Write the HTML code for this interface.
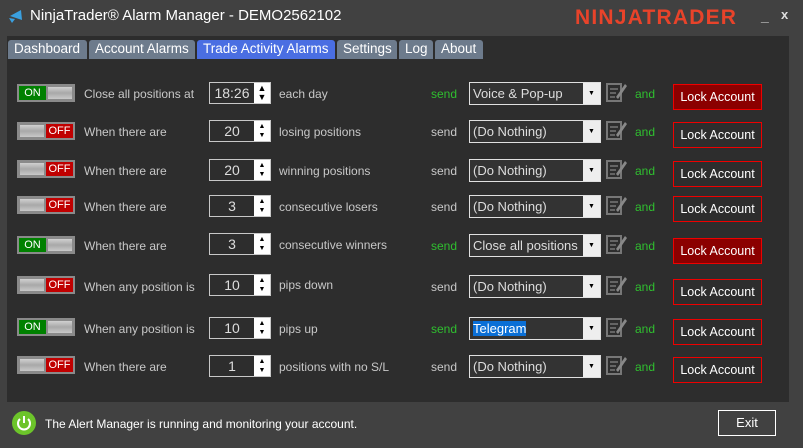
<!DOCTYPE html>
<html><head><meta charset="utf-8"><style>
*{margin:0;padding:0;box-sizing:border-box}
body{width:803px;height:448px;background:#414141;font-family:"Liberation Sans",sans-serif;font-size:12px;color:#c8c8c8;position:relative;overflow:hidden}
.a{position:absolute;white-space:nowrap}
.title{left:30px;top:7px;font-size:15px;color:#fff}
.logo{left:575px;top:6px;font-size:21px;font-weight:bold;color:#e8432a;letter-spacing:1.2px}
.strip{left:7px;top:36px;width:782px;height:22px;background:#2d2d2d}
.panel{left:7px;top:58px;width:782px;height:344px;background:#2d2d2d}
.tab{top:40px;height:19px;background:#6d7b8c;color:#fff;font-size:13.5px;padding:1px 0 0 6px;border-radius:3px 3px 0 0}
.tab.on{background:#4a6ee2}
.tg{left:17px;width:58px;height:18px;background:#8a8a8a}
.tg .k{position:absolute;top:2px;width:27px;height:14px;color:#fff;font-size:11px;text-align:center;line-height:14px}
.tg .g{position:absolute;top:3px;width:24px;height:12px;background:linear-gradient(#d0d0d0,#a8a8a8 50%,#c8c8c8)}
.sp{left:209px;width:62px;height:22px;border:1px solid #c8c8c8;background:#2d2d2d;color:#ddd;font-size:14px}
.sp .v{position:absolute;left:0;width:44px;text-align:center;top:2px}
.sp .b{position:absolute;right:0;top:0;width:16px;height:20px;background:#fff;color:#000;font-size:7px;text-align:center;line-height:9px;padding-top:1px}
.dd{left:469px;width:132px;height:23px;border:1px solid #e0e0e0;background:#333;color:#ddd;font-size:13px;padding:3px 0 0 3px}
.dd .b{position:absolute;right:0;top:0;width:17px;height:21px;background:#eee;color:#000;font-size:7px;text-align:center;line-height:21px}
.lk{left:673px;width:89px;height:26px;border:1px solid #e00;color:#fff;font-size:12.5px;text-align:center;line-height:24px}
.lk.f{background:#8b0000}
.gr{color:#2fbf2f}
</style></head><body>
<svg class="a" style="left:7px;top:8px" width="18" height="18" viewBox="0 0 18 18"><path d="M3 8 L14 2 L15 12 Z" fill="#3aa0e0"/><path d="M2 10 L8 11 L5 15 Z" fill="#3aa0e0"/></svg>
<div class="a title">NinjaTrader® Alarm Manager - DEMO2562102</div>
<div class="a logo">NINJATRADER</div>
<div class="a" style="left:761px;top:8px;color:#ddd;font-size:14px;font-weight:bold">_</div>
<div class="a" style="left:781px;top:7px;color:#ddd;font-size:13px;font-weight:bold">x</div>
<div class="a strip"></div>
<div class="a panel"></div>
<div class="a tab" style="left:8px;width:79px">Dashboard</div>
<div class="a tab" style="left:89px;width:106px">Account Alarms</div>
<div class="a tab on" style="left:197px;width:138px">Trade Activity Alarms</div>
<div class="a tab" style="left:337px;width:60px">Settings</div>
<div class="a tab" style="left:399px;width:34px">Log</div>
<div class="a tab" style="left:435px;width:48px">About</div>

<!-- r1 -->
<div class="a tg" style="top:84px"><div class="k" style="left:2px;background:#008000">ON</div><div class="g" style="left:31px"></div></div>
<div class="a" style="left:84px;top:87px">Close all positions at</div>
<div class="a sp" style="top:82px"><div class="v">18:26</div><div class="b" style="font-size:9px;line-height:9px">▲<br>▼</div></div>
<div class="a" style="left:279px;top:87px">each day</div>
<div class="a gr" style="left:431px;top:87px">send</div>
<div class="a dd" style="top:82px">Voice &amp; Pop-up<div class="b">▼</div></div>
<div class="a gr" style="left:635px;top:87px">and</div>
<div class="a lk f" style="top:84px">Lock Account</div>

<!-- r2 -->
<div class="a tg" style="top:122px"><div class="g" style="left:3px"></div><div class="k" style="left:29px;background:#c00000">OFF</div></div>
<div class="a" style="left:84px;top:125px">When there are</div>
<div class="a sp" style="top:120px"><div class="v">20</div><div class="b">▲<br>▼</div></div>
<div class="a" style="left:279px;top:125px">losing positions</div>
<div class="a" style="left:431px;top:125px">send</div>
<div class="a dd" style="top:120px">(Do Nothing)<div class="b">▼</div></div>
<div class="a gr" style="left:635px;top:125px">and</div>
<div class="a lk" style="top:122px">Lock Account</div>

<!-- r3 -->
<div class="a tg" style="top:160px"><div class="g" style="left:3px"></div><div class="k" style="left:29px;background:#c00000">OFF</div></div>
<div class="a" style="left:84px;top:164px">When there are</div>
<div class="a sp" style="top:159px"><div class="v">20</div><div class="b">▲<br>▼</div></div>
<div class="a" style="left:279px;top:164px">winning positions</div>
<div class="a" style="left:431px;top:164px">send</div>
<div class="a dd" style="top:159px">(Do Nothing)<div class="b">▼</div></div>
<div class="a gr" style="left:635px;top:164px">and</div>
<div class="a lk" style="top:161px">Lock Account</div>

<!-- r4 -->
<div class="a tg" style="top:196px"><div class="g" style="left:3px"></div><div class="k" style="left:29px;background:#c00000">OFF</div></div>
<div class="a" style="left:84px;top:200px">When there are</div>
<div class="a sp" style="top:195px"><div class="v">3</div><div class="b">▲<br>▼</div></div>
<div class="a" style="left:279px;top:200px">consecutive losers</div>
<div class="a" style="left:431px;top:200px">send</div>
<div class="a dd" style="top:195px">(Do Nothing)<div class="b">▼</div></div>
<div class="a gr" style="left:635px;top:200px">and</div>
<div class="a lk" style="top:196px">Lock Account</div>

<!-- r5 -->
<div class="a tg" style="top:236px"><div class="k" style="left:2px;background:#008000">ON</div><div class="g" style="left:31px"></div></div>
<div class="a" style="left:84px;top:239px">When there are</div>
<div class="a sp" style="top:233px"><div class="v">3</div><div class="b">▲<br>▼</div></div>
<div class="a" style="left:279px;top:238px">consecutive winners</div>
<div class="a gr" style="left:431px;top:239px">send</div>
<div class="a dd" style="top:234px">Close all positions<div class="b">▼</div></div>
<div class="a gr" style="left:635px;top:239px">and</div>
<div class="a lk f" style="top:238px">Lock Account</div>

<!-- r6 -->
<div class="a tg" style="top:276px"><div class="g" style="left:3px"></div><div class="k" style="left:29px;background:#c00000">OFF</div></div>
<div class="a" style="left:84px;top:280px">When any position is</div>
<div class="a sp" style="top:274px"><div class="v">10</div><div class="b">▲<br>▼</div></div>
<div class="a" style="left:279px;top:278px">pips down</div>
<div class="a" style="left:431px;top:280px">send</div>
<div class="a dd" style="top:275px">(Do Nothing)<div class="b">▼</div></div>
<div class="a gr" style="left:635px;top:280px">and</div>
<div class="a lk" style="top:279px">Lock Account</div>

<!-- r7 -->
<div class="a tg" style="top:318px"><div class="k" style="left:2px;background:#008000">ON</div><div class="g" style="left:31px"></div></div>
<div class="a" style="left:84px;top:322px">When any position is</div>
<div class="a sp" style="top:317px"><div class="v">10</div><div class="b">▲<br>▼</div></div>
<div class="a" style="left:279px;top:322px">pips up</div>
<div class="a gr" style="left:431px;top:322px">send</div>
<div class="a dd" style="top:317px"><span style="background:#0a6fd6;color:#fff">Telegram</span><div class="b">▼</div></div>
<div class="a gr" style="left:635px;top:322px">and</div>
<div class="a lk" style="top:319px">Lock Account</div>

<!-- r8 -->
<div class="a tg" style="top:356px"><div class="g" style="left:3px"></div><div class="k" style="left:29px;background:#c00000">OFF</div></div>
<div class="a" style="left:84px;top:360px">When there are</div>
<div class="a sp" style="top:355px"><div class="v">1</div><div class="b">▲<br>▼</div></div>
<div class="a" style="left:279px;top:360px">positions with no S/L</div>
<div class="a" style="left:431px;top:360px">send</div>
<div class="a dd" style="top:355px">(Do Nothing)<div class="b">▼</div></div>
<div class="a gr" style="left:635px;top:360px">and</div>
<div class="a lk" style="top:357px">Lock Account</div>

<!-- edit icons -->
<svg class="a" style="left:606px;top:81px" width="22" height="22"><rect x="1" y="3" width="14" height="17" fill="none" stroke="#777" stroke-width="2"/><path d="M4 8h8M4 12h6M4 16h5" stroke="#777" stroke-width="1.5"/><path d="M10 16 L19 3 L21 5 L12 18 Z" fill="#888"/></svg>
<svg class="a" style="left:606px;top:119px" width="22" height="22"><rect x="1" y="3" width="14" height="17" fill="none" stroke="#777" stroke-width="2"/><path d="M4 8h8M4 12h6M4 16h5" stroke="#777" stroke-width="1.5"/><path d="M10 16 L19 3 L21 5 L12 18 Z" fill="#888"/></svg>
<svg class="a" style="left:606px;top:158px" width="22" height="22"><rect x="1" y="3" width="14" height="17" fill="none" stroke="#777" stroke-width="2"/><path d="M4 8h8M4 12h6M4 16h5" stroke="#777" stroke-width="1.5"/><path d="M10 16 L19 3 L21 5 L12 18 Z" fill="#888"/></svg>
<svg class="a" style="left:606px;top:194px" width="22" height="22"><rect x="1" y="3" width="14" height="17" fill="none" stroke="#777" stroke-width="2"/><path d="M4 8h8M4 12h6M4 16h5" stroke="#777" stroke-width="1.5"/><path d="M10 16 L19 3 L21 5 L12 18 Z" fill="#888"/></svg>
<svg class="a" style="left:606px;top:233px" width="22" height="22"><rect x="1" y="3" width="14" height="17" fill="none" stroke="#777" stroke-width="2"/><path d="M4 8h8M4 12h6M4 16h5" stroke="#777" stroke-width="1.5"/><path d="M10 16 L19 3 L21 5 L12 18 Z" fill="#888"/></svg>
<svg class="a" style="left:606px;top:274px" width="22" height="22"><rect x="1" y="3" width="14" height="17" fill="none" stroke="#777" stroke-width="2"/><path d="M4 8h8M4 12h6M4 16h5" stroke="#777" stroke-width="1.5"/><path d="M10 16 L19 3 L21 5 L12 18 Z" fill="#888"/></svg>
<svg class="a" style="left:606px;top:316px" width="22" height="22"><rect x="1" y="3" width="14" height="17" fill="none" stroke="#777" stroke-width="2"/><path d="M4 8h8M4 12h6M4 16h5" stroke="#777" stroke-width="1.5"/><path d="M10 16 L19 3 L21 5 L12 18 Z" fill="#888"/></svg>
<svg class="a" style="left:606px;top:354px" width="22" height="22"><rect x="1" y="3" width="14" height="17" fill="none" stroke="#777" stroke-width="2"/><path d="M4 8h8M4 12h6M4 16h5" stroke="#777" stroke-width="1.5"/><path d="M10 16 L19 3 L21 5 L12 18 Z" fill="#888"/></svg>

<!-- footer -->
<svg class="a" style="left:11px;top:410px" width="26" height="26"><circle cx="13" cy="13" r="12" fill="#6cc42a"/><path d="M9 9 A6 6 0 1 0 17 9" fill="none" stroke="#fff" stroke-width="2"/><path d="M13 6v7" stroke="#fff" stroke-width="2"/></svg>
<div class="a" style="left:45px;top:417px;color:#fff">The Alert Manager is running and monitoring your account.</div>
<div class="a" style="left:718px;top:410px;width:58px;height:26px;border:1px solid #fff;color:#fff;text-align:center;line-height:24px;font-size:13px">Exit</div>
</body></html>
